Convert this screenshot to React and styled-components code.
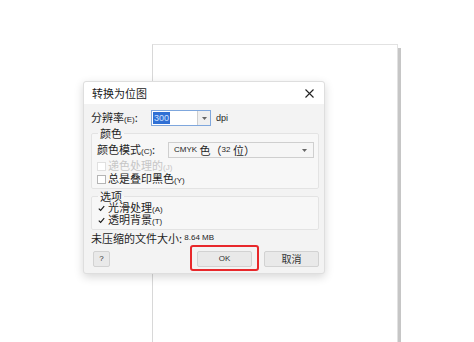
import React from "react";
import styled, { createGlobalStyle } from "styled-components";

const Global = createGlobalStyle`
  html, body { margin: 0; padding: 0; background: #ffffff; }
  body { width: 474px; height: 342px; overflow: hidden; font-family: "Noto Sans CJK SC", "Noto Sans", sans-serif; }
`;

const Desk = styled.div`
  position: relative;
  width: 474px;
  height: 342px;
  background: #ffffff;
  overflow: hidden;
`;

const Sheet = styled.div`
  position: absolute;
  left: 152px;
  top: 44px;
  width: 244px;
  height: 320px;
  background: #ffffff;
  border-left: 1px solid #d8d8d8;
  border-top: 1px solid #e2e2e2;
  border-right: 1px solid #e2e2e2;
  box-shadow: 3px 4px 0 0 #c6c6c6;
`;

const Dialog = styled.div`
  position: absolute;
  left: 83px;
  top: 81px;
  width: 240px;
  height: 191px;
  display: flex;
  flex-direction: column;
  background: #f3f3f3;
  border: 1px solid #dedede;
  border-radius: 3px;
  box-shadow: 0 3px 10px rgba(0, 0, 0, 0.16);
`;

const TitleBar = styled.div`
  height: 22px;
  flex: none;
  display: flex;
  align-items: center;
  justify-content: space-between;
  padding: 0 10px 0 8px;
  background: #ffffff;
  border-radius: 3px 3px 0 0;
  font-size: 11px;
  color: #1a1a1a;
`;

const Close = styled.svg`
  width: 9px;
  height: 9px;
`;

const Body = styled.div`
  flex: 1;
  display: flex;
  flex-direction: column;
  padding: 6px 6px 0 7px;
  font-size: 11px;
  line-height: 12px;
  color: #1e1e1e;
`;

const Row = styled.div`
  display: flex;
  align-items: center;
  flex: none;
  height: ${(p) => p.h || 16}px;
`;

const Label = styled.span`
  flex: none;
  width: ${(p) => (p.w ? `${p.w}px` : "auto")};
  white-space: nowrap;
  color: ${(p) => (p.disabled ? "#c6c6c6" : "#1e1e1e")};
`;

const Key = styled.span`
  font-size: 8px;
  font-family: "Liberation Sans", sans-serif;
`;

const Combo = styled.div`
  flex: none;
  display: flex;
  width: ${(p) => p.w}px;
  height: 16px;
  box-sizing: border-box;
  border: 1px solid ${(p) => (p.focus ? "#7fa7dd" : "#cfcfcf")};
  background: ${(p) => (p.focus ? "#ffffff" : "#f6f6f6")};
  align-items: center;
`;

const ComboText = styled.div`
  flex: 1;
  display: flex;
  align-items: center;
  padding-left: ${(p) => p.pl || 2}px;
  font-size: 11px;
  white-space: nowrap;
`;

const Selected = styled.span`
  background: #2f6fd4;
  color: #cfe0ff;
  font-family: "Liberation Sans", sans-serif;
  font-size: 9px;
  padding: 0 1px;
  line-height: 12px;
`;

const Small = styled.span`
  font-family: "Liberation Sans", sans-serif;
  font-size: 8px;
`;

const DropBtn = styled.div`
  width: 12px;
  height: 100%;
  border-left: 1px solid #cfcfcf;
  background: #f0f0f0;
  display: flex;
  align-items: center;
  justify-content: center;
`;

const Caret = styled.svg`
  width: 5px;
  height: 3px;
  flex: none;
  margin-right: ${(p) => p.mr || 0}px;
`;

const Unit = styled.span`
  margin-left: 5px;
  font-family: "Liberation Sans", sans-serif;
  font-size: 9px;
`;

const Group = styled.fieldset`
  margin: ${(p) => p.mt || 0}px 0 0 0;
  padding: ${(p) => p.pt || 0}px 0 ${(p) => p.pb || 2}px 5px;
  border: 1px solid #e3e3e3;
  background: #f7f7f7;
  border-radius: 2px;
  width: 228px;
  min-width: 0;
  box-sizing: border-box;
  display: flex;
  flex-direction: column;
`;

const Legend = styled.legend`
  padding: 0 2px;
  margin-left: 1px;
  font-size: 11px;
  line-height: 11px;
  color: #1e1e1e;
`;

const CheckRow = styled.div`
  display: flex;
  align-items: center;
  flex: none;
  height: ${(p) => p.h || 13}px;
`;

const Box = styled.span`
  flex: none;
  width: 9px;
  height: 9px;
  margin-right: 2px;
  box-sizing: border-box;
  border: 1px solid ${(p) => (p.checked ? "transparent" : p.disabled ? "#e0e0e0" : "#b5b5b5")};
  background: ${(p) => (p.checked ? "transparent" : "#ffffff")};
  display: flex;
  align-items: center;
  justify-content: center;
`;

const Info = styled.div`
  margin-top: 1px;
  height: 14px;
  display: flex;
  align-items: center;
  white-space: nowrap;
`;

const Buttons = styled.div`
  display: flex;
  align-items: center;
  margin-top: 6px;
  height: 16px;
  padding-left: 2px;
`;

const Btn = styled.div`
  flex: none;
  width: ${(p) => p.w}px;
  height: 16px;
  box-sizing: border-box;
  border: 1px solid #d2d2d2;
  background: #e9e9e9;
  border-radius: 2px;
  display: flex;
  align-items: center;
  justify-content: center;
  font-size: ${(p) => p.fs || 10}px;
  font-family: ${(p) => (p.latin ? '"Liberation Sans", sans-serif' : '"Noto Sans CJK SC", sans-serif')};
  color: #333;
  margin-left: ${(p) => p.ml || 0}px;
  position: relative;
`;

const Highlight = styled.span`
  position: absolute;
  left: -8px;
  right: -8px;
  top: -7px;
  bottom: -5px;
  border: 2px solid #e8282b;
  border-radius: 3px;
`;

const Check = ({ checked, disabled }) => (
  <Box checked={checked} disabled={disabled}>
    {checked && (
      <svg width="9" height="9" viewBox="0 0 9 9">
        <path d="M1 4.6 L3.4 7 L8 1.6" fill="none" stroke="#1a1a1a" strokeWidth="1.5" />
      </svg>
    )}
  </Box>
);

const CaretIcon = ({ mr }) => (
  <Caret viewBox="0 0 5 3" mr={mr}>
    <path d="M0 0 H5 L2.5 3 Z" fill="#666" />
  </Caret>
);

export default function App() {
  return (
    <Desk>
      <Global />
      <Sheet />
      <Dialog>
        <TitleBar>
          <span>转换为位图</span>
          <Close viewBox="0 0 9 9">
            <path d="M0.5 0.5 L8.5 8.5 M8.5 0.5 L0.5 8.5" stroke="#222" strokeWidth="1.1" />
          </Close>
        </TitleBar>
        <Body>
          <Row h={16}>
            <Label w={60}>
              分辨率<Key>(E)</Key>:
            </Label>
            <Combo w={60} focus>
              <ComboText pl={1}>
                <Selected>300</Selected>
              </ComboText>
              <DropBtn>
                <CaretIcon />
              </DropBtn>
            </Combo>
            <Unit>dpi</Unit>
          </Row>
          <Group mt={2} pt={2} pb={2}>
            <Legend>颜色</Legend>
            <Row h={18}>
              <Label w={71}>
                颜色模式<Key>(C)</Key>:
              </Label>
              <Combo w={146}>
                <ComboText pl={5}>
                  <Small>CMYK</Small>&nbsp;色（<Small>32</Small>&nbsp;位）
                </ComboText>
                <CaretIcon mr={6} />
              </Combo>
            </Row>
            <CheckRow h={14}>
              <Check disabled />
              <Label disabled>
                递色处理的<Key>(J)</Key>
              </Label>
            </CheckRow>
            <CheckRow h={13}>
              <Check />
              <Label>
                总是叠印黑色<Key>(Y)</Key>
              </Label>
            </CheckRow>
          </Group>
          <Group mt={2} pt={0} pb={2}>
            <Legend>选项</Legend>
            <CheckRow h={12}>
              <Check checked />
              <Label>
                光滑处理<Key>(A)</Key>
              </Label>
            </CheckRow>
            <CheckRow h={13}>
              <Check checked />
              <Label>
                透明背景<Key>(T)</Key>
              </Label>
            </CheckRow>
          </Group>
          <Info>
            未压缩的文件大小: <Small>&nbsp;8.64 MB</Small>
          </Info>
          <Buttons>
            <Btn w={17} latin fs={8}>?</Btn>
            <Btn w={55} ml={87} latin fs={8}>
              OK
              <Highlight />
            </Btn>
            <Btn w={55} ml={12}>取消</Btn>
          </Buttons>
        </Body>
      </Dialog>
    </Desk>
  );
}
